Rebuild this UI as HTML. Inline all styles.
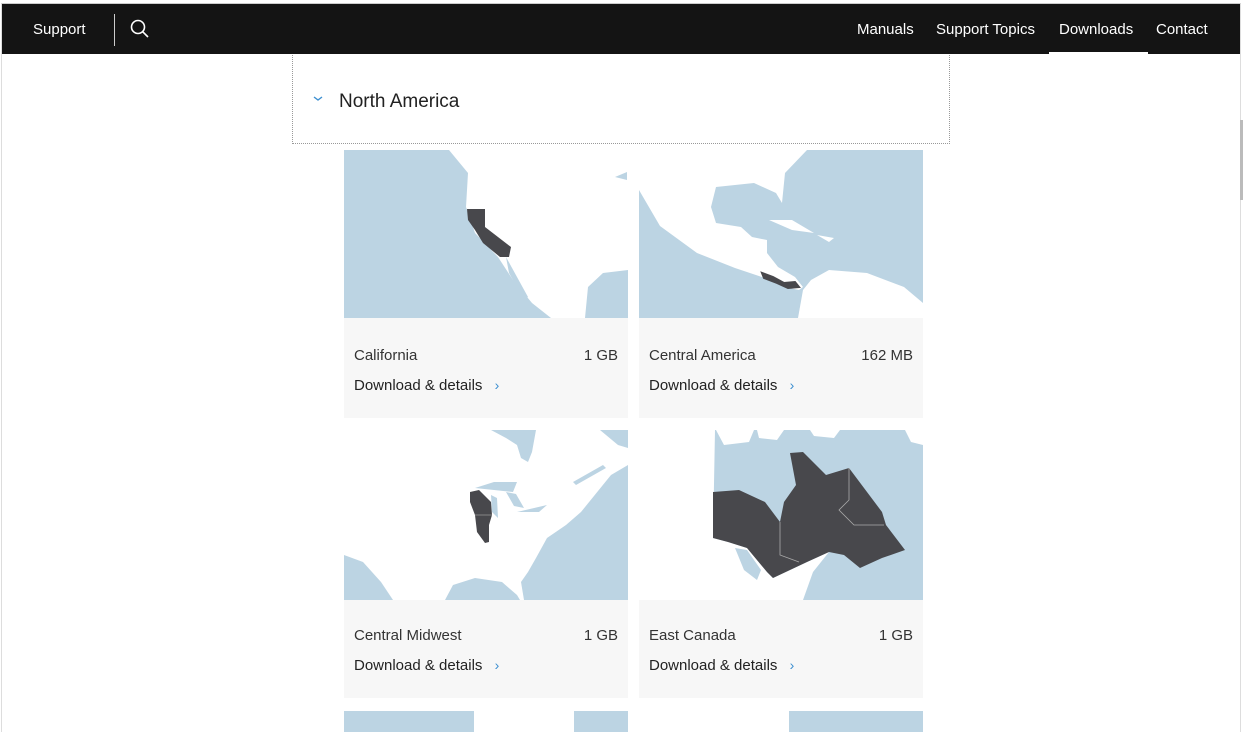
<!DOCTYPE html>
<html><head><meta charset="utf-8"><style>
*{margin:0;padding:0;box-sizing:border-box}
body{width:1244px;height:732px;overflow:hidden;background:#fff;font-family:"Liberation Sans",sans-serif;color:#222;position:relative}
.frame{position:absolute;left:1px;top:3px;width:1240px;height:729px;border-left:1px solid #ddd;border-right:1px solid #ddd;border-top:1px solid #ccc}
.nav{position:absolute;left:2px;top:4px;width:1238px;height:50px;background:#141414;color:#fff;font-size:15px}
.nav span{position:absolute;top:17px}
.sep{position:absolute;left:112px;top:10px;width:1px;height:32px;background:#ccc}
.ul{position:absolute;left:1047px;top:48px;width:99px;height:2px;background:#fff}
.acc{position:absolute;left:292px;top:55px;width:658px;height:89px;border:1px dotted #999;border-top:none}
.acc .t{position:absolute;left:46px;top:36px;font-size:19px;color:#222}
.card{position:absolute;width:284px;height:268px;background:#f7f7f7}
.card svg{display:block}
.name{position:absolute;left:10px;top:197px;font-size:15px;color:#333}
.size{position:absolute;right:10px;top:197px;font-size:15px;color:#333}
.dl{position:absolute;left:10px;top:227px;font-size:15px;color:#222}
.dl b{font-weight:normal;color:#3d8fd0;margin-left:8px;font-size:14px}
.sb{position:absolute;left:1240px;top:120px;width:3px;height:80px;background:#bbb}
</style></head><body>
<div class="frame"></div>
<div class="nav">
<span style="left:31px">Support</span>
<div class="sep"></div>
<svg style="position:absolute;left:128px;top:15px" width="20" height="20" viewBox="0 0 20 20"><circle cx="8" cy="8" r="6.5" fill="none" stroke="#fff" stroke-width="1.6"/><line x1="12.8" y1="12.8" x2="18" y2="18" stroke="#fff" stroke-width="1.6"/></svg>
<span style="left:855px">Manuals</span>
<span style="left:934px">Support Topics</span>
<span style="left:1057px">Downloads</span>
<span style="left:1154px">Contact</span>
<div class="ul"></div>
</div>
<div class="acc"><svg style="position:absolute;left:20px;top:41px" width="10" height="6"><path d="M1 1L5 4L9 1" fill="none" stroke="#3d8fd0" stroke-width="1.4"/></svg><span class="t">North America</span></div>

<div class="card" style="left:344px;top:150px">
<svg width="284" height="168"><rect width="284" height="168" fill="#bcd4e3"/>
<path d="M105 0H284V120L259 123L244 137L241 168H207L188 153L169 130L154 107L131 83L122 57L124 23Z" fill="#fff"/>
<path d="M162 107L184 147L180 150L165 123Z" fill="#bcd4e3"/>
<path d="M271 27L283 22V30Z" fill="#bcd4e3"/>
<path d="M123 59H141V77L167 97L165 107L156 107L139 93L131 80L124 70Z" fill="#48484c"/></svg>
<div class="name">California</div><div class="size">1 GB</div><div class="dl">Download &amp; details <b>›</b></div></div>

<div class="card" style="left:639px;top:150px">
<svg width="284" height="168"><rect width="284" height="168" fill="#bcd4e3"/>
<path d="M0 0H168L146 23L143 53L137 43L115 33L77 37L72 57L77 73L102 77L113 87L128 90L128 103L139 117L156 127L164 137L160 140L150 138L126 128L96 118L58 103L21 76L0 40Z" fill="#fff"/>
<path d="M164 140L172 130L190 120L228 123L265 137L284 153V168H159Z" fill="#fff"/>
<path d="M130 70L153 70L175 83L153 80Z M178 85L195 88L190 92Z" fill="#fff"/>
<path d="M123 123L134 127L145 133L156 132L160 137L149 138L138 133L125 128Z" fill="#48484c" stroke="#48484c" stroke-width="2"/></svg>
<div class="name">Central America</div><div class="size">162 MB</div><div class="dl">Download &amp; details <b>›</b></div></div>

<div class="card" style="left:344px;top:430px">
<svg width="284" height="170"><rect width="284" height="170" fill="#fff"/>
<path d="M284 35L267 45L237 82L222 95L203 108L192 128L184 142L177 152L180 170H284Z" fill="#bcd4e3"/>
<path d="M256 0H284V18L274 15Z" fill="#bcd4e3"/>
<path d="M147 0H192L188 22L184 32L177 28L173 15L162 8Z" fill="#bcd4e3"/>
<path d="M131 58L150 52L173 52L169 62L150 60Z M147 65L153 68L154 88L148 82Z M162 62L172 64L180 78L170 76Z M173 82L203 75L195 82Z M229 52L259 35L262 38L232 55Z" fill="#bcd4e3"/>
<path d="M101 170L109 155L131 148L158 152L173 165L176 170Z" fill="#bcd4e3"/>
<path d="M0 125L19 132L37 152L49 170H0Z" fill="#bcd4e3"/>
<path d="M126 62L135 60L147 72L148 85L145 95L145 112L141 113L133 102L131 85L126 72Z" fill="#48484c"/>
<line x1="131" y1="85" x2="148" y2="85" stroke="#999" stroke-width="0.8"/></svg>
<div class="name">Central Midwest</div><div class="size">1 GB</div><div class="dl">Download &amp; details <b>›</b></div></div>

<div class="card" style="left:639px;top:430px">
<svg width="284" height="170"><rect width="284" height="170" fill="#bcd4e3"/>
<path d="M0 0H76L74 108L89 112L108 118L128 142L134 148L168 132L190 122L174 142L164 170H0Z" fill="#fff"/>
<path d="M96 118L108 120L122 140L118 150L105 140Z" fill="#bcd4e3"/>
<path d="M77 0H115L110 12L85 15Z M118 0H145L138 10L120 8Z M171 0H201L195 8L175 6Z M266 0H284V15L272 12Z" fill="#fff"/>
<path d="M74 62L100 60L126 72L141 92L145 72L157 55L151 23L164 22L187 45L210 38L243 82L247 95L266 120L243 128L221 138L205 125L190 122L168 132L134 148L128 142L108 118L89 112L74 108Z" fill="#48484c"/>
<path d="M141 92L141 125L160 132 M210 38L210 70L200 80L215 95L245 95" fill="none" stroke="#aaa" stroke-width="0.8"/></svg>
<div class="name">East Canada</div><div class="size">1 GB</div><div class="dl">Download &amp; details <b>›</b></div></div>

<div style="position:absolute;left:344px;top:711px;width:284px;height:21px;background:#fff"><div style="position:absolute;left:0;width:130px;height:21px;background:#bcd4e3"></div><div style="position:absolute;left:230px;width:54px;height:21px;background:#bcd4e3"></div></div>
<div style="position:absolute;left:639px;top:711px;width:284px;height:21px;background:#fff"><div style="position:absolute;left:150px;width:134px;height:21px;background:#bcd4e3"></div></div>
<div class="sb"></div>
</body></html>
